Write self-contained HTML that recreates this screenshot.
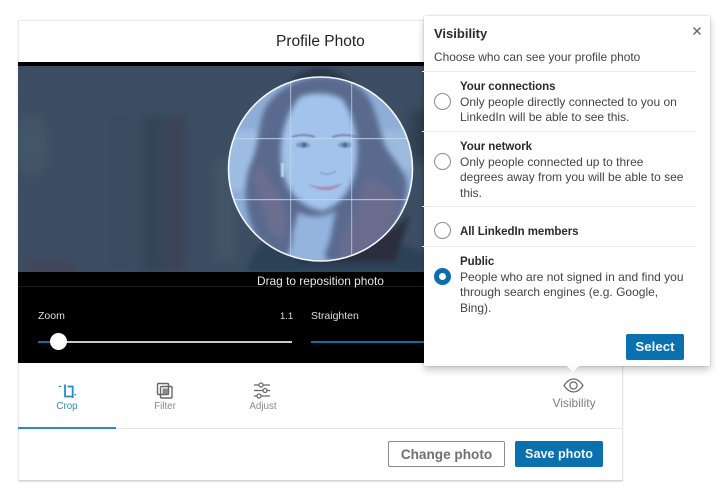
<!DOCTYPE html>
<html><head><meta charset="utf-8">
<style>
*{box-sizing:border-box}
html,body{margin:0;padding:0;width:720px;height:496px;overflow:hidden;background:#fff;font-family:"Liberation Sans",sans-serif}
.abs{position:absolute;white-space:nowrap}
#card{position:absolute;left:18px;top:20px;width:605px;height:461px;background:#fff;border:1px solid #e9e9e9;border-bottom:1px solid #d4d4d4;box-shadow:0 1px 2px rgba(0,0,0,.12)}
#pop{position:absolute;left:424px;top:16px;width:286px;height:350px;background:#fff;box-shadow:0 0 2px rgba(0,0,0,.2),0 4px 8px rgba(0,0,0,.22);border-radius:2px}
.hr{position:absolute;height:1px;background:#ececec;left:-2px;width:275px}
.t{position:absolute;left:36px;white-space:nowrap;font-size:12px;line-height:15.5px;color:#444}
.t b{color:#2b2b2b;font-weight:bold;font-size:11.5px;letter-spacing:-.05px;position:relative;top:1px}
.r{position:absolute;left:10px;width:17px;height:17px;border-radius:50%;border:1.3px solid #8c8c8c;background:#fff}
filter{color-interpolation-filters:sRGB}
</style></head><body>
<div id="card"></div>
<div class="abs" style="left:276px;top:33px;font-size:15.5px;line-height:18px;color:#222">Profile Photo</div>
<div class="abs" style="left:18px;top:62px;width:605px;height:301px;background:#000"></div>
<svg class="abs" style="left:18px;top:66px" width="605" height="206" viewBox="18 66 605 206">
<defs>
<filter id="b6" color-interpolation-filters="sRGB"><feGaussianBlur stdDeviation="5"/></filter>
<filter id="b2" color-interpolation-filters="sRGB" x="-10%" y="-10%" width="120%" height="120%"><feGaussianBlur stdDeviation="2.6"/></filter>
<filter id="b1" color-interpolation-filters="sRGB"><feGaussianBlur stdDeviation=".7"/></filter>
<clipPath id="c"><circle cx="320.5" cy="169" r="92"/></clipPath>
<clipPath id="box"><rect x="18" y="66" width="605" height="206"/></clipPath>
</defs>
<g clip-path="url(#box)">
<rect x="18" y="66" width="605" height="206" fill="#3c4e63"/>
<g filter="url(#b6)">
<rect x="110" y="116" width="20" height="156" fill="#394b60"/>
<rect x="142" y="116" width="22" height="156" fill="#344457"/>
<rect x="166" y="116" width="20" height="156" fill="#3d4357"/>
<ellipse cx="32" cy="145" rx="16" ry="30" fill="#435669"/>
<rect x="25" y="260" width="50" height="14" fill="#45445a"/>
<rect x="215" y="160" width="20" height="100" fill="#425668"/>
<rect x="410" y="110" width="30" height="50" fill="#303f50"/>
</g>
<g filter="url(#b2)">
<ellipse cx="320" cy="150" rx="55" ry="82" fill="#2d3748"/>
<path d="M247 272C250 250 262 240 285 232L360 232C385 240 410 246 422 252L424 272Z" fill="#2c4259"/>
<path d="M255 225C280 270 345 272 410 215L395 262 300 262Z" fill="#2a2e3f"/>
</g>
<g clip-path="url(#c)">
<rect x="225" y="70" width="190" height="200" fill="#8eaed8"/>
<g filter="url(#b2)">
<rect x="225" y="130" width="40" height="60" fill="#9dbde3"/>
<rect x="380" y="130" width="40" height="40" fill="#9abae0"/>
<path d="M263 113C272 90 300 76 322 76 350 76 368 90 373 107 378 120 380 130 384 143 390 158 405 168 407 185 407 210 395 235 370 258L330 262 300 225 285 260 258 240C245 215 242 190 250 165 258 150 258 130 263 113Z" fill="#5a6a8f"/>
<path d="M252 175C258 195 262 210 270 230 280 245 290 235 285 210 280 190 268 185 262 165Z" fill="#6b6e90"/>
<path d="M340 240C352 222 360 200 365 180 378 175 395 190 398 208 390 235 365 255 340 258Z" fill="#6a6c8e"/>
<path d="M300 97C312 92 332 92 343 100 354 118 358 135 357 155 356 185 343 205 322 211 300 207 283 190 281 160 279 135 288 110 300 97Z" fill="#a2c3ec"/>
<path d="M298 212C308 218 325 218 336 210L330 240 322 262 292 262 292 235Z" fill="#93b4de"/>
</g>
<g filter="url(#b1)">
<path d="M292 137Q303 133 315 137M332 137Q344 133 357 137" stroke="#6a7ba0" stroke-width="1.4" fill="none"/>
<ellipse cx="303" cy="145" rx="7" ry="3" fill="#7c98c0"/><ellipse cx="345" cy="145" rx="7" ry="3" fill="#7c98c0"/>
<circle cx="304" cy="145" r="2.4" fill="#4d6a90"/><circle cx="345" cy="145" r="2.4" fill="#4d6a90"/>
<path d="M320 172Q327 177 336 171" stroke="#86a0c8" stroke-width="1.5" fill="none"/>
<path d="M307 184Q325 190 343 183Q328 197 307 184Z" fill="#a98eb4"/>
<rect x="281" y="163" width="3" height="14" fill="#bcd7e6"/>
</g>
<rect x="290" y="70" width="1.2" height="200" fill="#c8d8ee" opacity=".6"/>
<rect x="351" y="70" width="1.2" height="200" fill="#c8d8ee" opacity=".6"/>
<rect x="225" y="138" width="190" height="1.2" fill="#c8d8ee" opacity=".75"/>
<rect x="225" y="199" width="190" height="1.2" fill="#c8d8ee" opacity=".75"/>
</g>
<circle cx="320.5" cy="169" r="92" fill="none" stroke="#f4f7fb" stroke-width="1.6"/>
</g>
</svg>
<div class="abs" style="left:18px;top:286px;width:605px;height:1px;background:#1c1c1c"></div>
<div class="abs" style="left:257px;top:273.5px;font-size:11.9px;line-height:14px;color:#e8e8e8">Drag to reposition photo</div>
<div class="abs" style="left:38px;top:310px;font-size:10.5px;line-height:13px;color:#ddd">Zoom</div>
<div class="abs" style="left:280px;top:310px;font-size:9.5px;line-height:13px;color:#ddd">1.1</div>
<div class="abs" style="left:311px;top:310px;font-size:10.5px;line-height:13px;color:#ddd">Straighten</div>
<div class="abs" style="left:38px;top:341px;width:20px;height:2px;background:#0e6ea8"></div>
<div class="abs" style="left:58px;top:341px;width:234px;height:2px;background:#c8c8c8"></div>
<div class="abs" style="left:50px;top:333px;width:17px;height:17px;border-radius:50%;background:#fff"></div>
<div class="abs" style="left:311px;top:341px;width:115px;height:2px;background:#0e6ea8"></div>
<svg class="abs" style="left:58px;top:381px" width="20" height="18" viewBox="0 0 20 18" fill="none" stroke="#2a8bc2" stroke-width="1.8">
<path d="M7 3.5V15.5H15.5"/><path d="M9.5 5.5H14.7V17"/><path d="M.6 5.5H3M16.5 13.7H18" stroke-width="1.3"/>
</svg>
<div class="abs" style="left:18px;width:98px;top:401px;text-align:center;font-size:9.8px;line-height:11px;color:#2a8bc2">Crop</div>
<svg class="abs" style="left:156px;top:382px" width="18" height="18" viewBox="0 0 18 18" fill="none" stroke="#666" stroke-width="1.4">
<rect x="1.5" y="1.5" width="11" height="11" rx="1"/><rect x="4.5" y="4.5" width="11.5" height="11.5" rx="1"/><rect x="6.5" y="6.5" width="5.5" height="5.5" fill="#888" stroke="none"/>
</svg>
<div class="abs" style="left:116px;width:98px;top:401px;text-align:center;font-size:9.8px;line-height:11px;color:#8a8a8a">Filter</div>
<svg class="abs" style="left:253px;top:382px" width="18" height="18" viewBox="0 0 18 18" fill="none" stroke="#666" stroke-width="1.2">
<path d="M1 3H6M10 3H17M1 8.5H10M14 8.5H17M1 14H4M8 14H17"/><circle cx="8" cy="3" r="2"/><circle cx="12" cy="8.5" r="2"/><circle cx="6" cy="14" r="2"/>
</svg>
<div class="abs" style="left:214px;width:98px;top:401px;text-align:center;font-size:9.8px;line-height:11px;color:#8a8a8a">Adjust</div>
<svg class="abs" style="left:563px;top:377px" width="21" height="16" viewBox="0 0 21 16" fill="none" stroke="#666" stroke-width="1.2">
<path d="M1 8.5C4 4 7 2 10.5 2S17 4 20 8.5C17 13 14 15 10.5 15S4 13 1 8.5Z"/><circle cx="10.5" cy="8.5" r="3.6"/>
</svg>
<div class="abs" style="left:524px;width:100px;top:397px;text-align:center;font-size:12px;line-height:13px;color:#7d7d7d">Visibility</div>
<div class="abs" style="left:18px;top:427px;width:98px;height:2px;background:#2a8bc2"></div>
<div class="abs" style="left:116px;top:428px;width:506px;height:1px;background:#e6e6e6"></div>
<div class="abs" style="left:388px;top:441px;width:117px;height:26px;border:1px solid #8c8c8c;border-radius:2px;text-align:center;font-size:13.6px;font-weight:bold;line-height:25px;color:#707070;background:#fff">Change photo</div>
<div class="abs" style="left:515px;top:441px;width:88px;height:26px;border-radius:2px;background:#0a70ae;text-align:center;font-size:12.6px;font-weight:bold;line-height:26px;color:#f2f6fa">Save photo</div>
<div id="pop">
<div class="abs" style="left:10px;top:10px;font-size:13px;font-weight:bold;line-height:16px;color:#2b2b2b">Visibility</div>
<svg class="abs" style="left:269px;top:11px" width="8" height="8" viewBox="0 0 8 8" stroke="#666" stroke-width="1.4"><path d="M.5 .5L7.5 7.5M7.5 .5L.5 7.5"/></svg>
<div class="abs" style="left:10px;top:34px;font-size:11.9px;line-height:15px;color:#444">Choose who can see your profile photo</div>
<div class="hr" style="top:55px"></div>
<div class="t" style="top:62px"><b>Your connections</b><br>Only people directly connected to you on<br>LinkedIn will be able to see this.</div>
<div class="r" style="top:77px"></div>
<div class="hr" style="top:115px"></div>
<div class="t" style="top:122px"><b>Your network</b><br>Only people connected up to three<br>degrees away from you will be able to see<br>this.</div>
<div class="r" style="top:137px"></div>
<div class="hr" style="top:190px"></div>
<div class="t" style="top:207px"><b>All LinkedIn members</b></div>
<div class="r" style="top:206px"></div>
<div class="hr" style="top:230px"></div>
<div class="t" style="top:237px"><b>Public</b><br>People who are not signed in and find you<br>through search engines (e.g. Google,<br>Bing).</div>
<div class="r" style="top:252px;border:5px solid #0a70ae"></div>
<div class="abs" style="left:202px;top:318px;width:58px;height:26px;border-radius:2px;background:#0a70ae;text-align:center;font-size:13.3px;font-weight:bold;line-height:26px;color:#f2f6fa">Select</div>
</div>
<svg class="abs" style="left:566px;top:365px" width="14" height="8" viewBox="0 0 14 8"><path d="M1 1H13L7 7Z" fill="#fff"/></svg>
</body></html>
